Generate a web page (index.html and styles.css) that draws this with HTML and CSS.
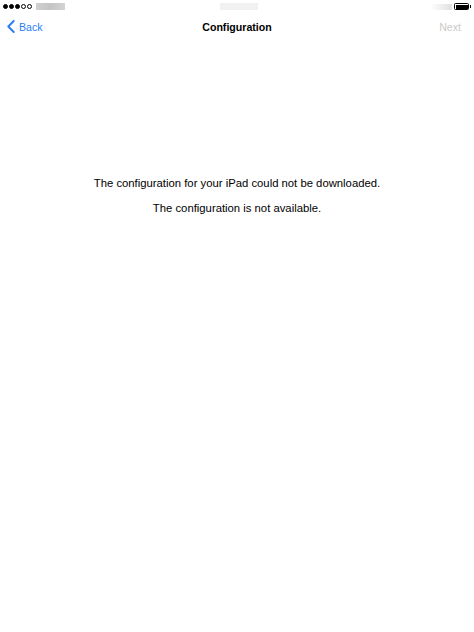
FILE: index.html
```html
<!DOCTYPE html>
<html>
<head>
<meta charset="utf-8">
<link rel="stylesheet" href="styles.css">
</head>
<body>
<div class="status">
  <div class="status-left">
    <span class="dot fill"></span><span class="dot fill"></span><span class="dot fill"></span><span class="dot"></span><span class="dot"></span>
    <span class="carrier"></span>
  </div>
  <div class="status-center"></div>
  <div class="status-right">
    <span class="pct"></span>
    <span class="battery"><span class="level"></span></span>
  </div>
</div>
<div class="nav">
  <div class="back">
    <svg class="chev" width="8" height="13" viewBox="0 0 8 13"><path d="M6.7 1 L1.3 6.5 L6.7 12" fill="none" stroke="#2b7cf2" stroke-width="1.9" stroke-linecap="round" stroke-linejoin="round"/></svg>
    <span>Back</span>
  </div>
  <div class="title">Configuration</div>
  <div class="next">Next</div>
</div>
<div class="content">
  <p class="msg">The configuration for your iPad could not be downloaded.</p>
  <p class="msg">The configuration is not available.</p>
</div>
</body>
</html>
```
FILE: styles.css
```css
html, body {
  margin: 0;
  padding: 0;
  background: #fff;
}
body {
  width: 474px;
  height: 632px;
  font-family: "Liberation Sans", Arial, sans-serif;
  color: #000;
  overflow: hidden;
}
.status {
  height: 13px;
  display: flex;
  align-items: center;
  justify-content: space-between;
  padding: 0 3px 0 3px;
  position: relative;
}
.status-left {
  display: flex;
  align-items: center;
  gap: 0.5px;
}
.dot {
  width: 3px;
  height: 3px;
  border-radius: 50%;
  border: 0.5px solid #000;
  box-sizing: content-box;
  margin-right: 0.5px;
}
.dot.fill { background: #000; }
.carrier {
  width: 29px;
  height: 7px;
  margin-left: 3px;
  background: linear-gradient(90deg, #d0d0d0, #c4c4c4 50%, #d4d4d4);
  filter: blur(0.5px);
}
.status-center {
  position: absolute;
  left: 220px;
  top: 3px;
  width: 38px;
  height: 7px;
  background: #f1f1f1;
  filter: blur(0.6px);
}
.status-right {
  display: flex;
  align-items: center;
  gap: 2px;
}
.pct {
  width: 22px;
  height: 6px;
  background: linear-gradient(90deg, #ffffff, #e0e0e0);
  filter: blur(0.5px);
}
.battery {
  width: 12px;
  height: 4px;
  border: 1px solid #000;
  border-radius: 1.5px;
  padding: 0.5px;
  position: relative;
  box-sizing: content-box;
  margin-right: 2px;
}
.battery::after {
  content: "";
  position: absolute;
  right: -3px;
  top: 1px;
  width: 1.5px;
  height: 3px;
  background: #000;
}
.level {
  display: block;
  width: 100%;
  height: 100%;
  background: #000;
}
.nav {
  height: 25px;
  padding: 1px 13px 0 7px;
  display: flex;
  align-items: center;
  justify-content: space-between;
  position: relative;
  font-size: 10.6px;
}
.back {
  display: flex;
  align-items: center;
  gap: 4px;
  color: #2b7cf2;
}
.title {
  position: absolute;
  left: 0;
  right: 0;
  text-align: center;
  font-weight: bold;
  pointer-events: none;
}
.next {
  color: #c9c9c9;
}
.content {
  padding-top: 137px;
  text-align: center;
}
.msg {
  margin: 0 0 11px 0;
  font-size: 11.3px;
  line-height: 14px;
}
```
